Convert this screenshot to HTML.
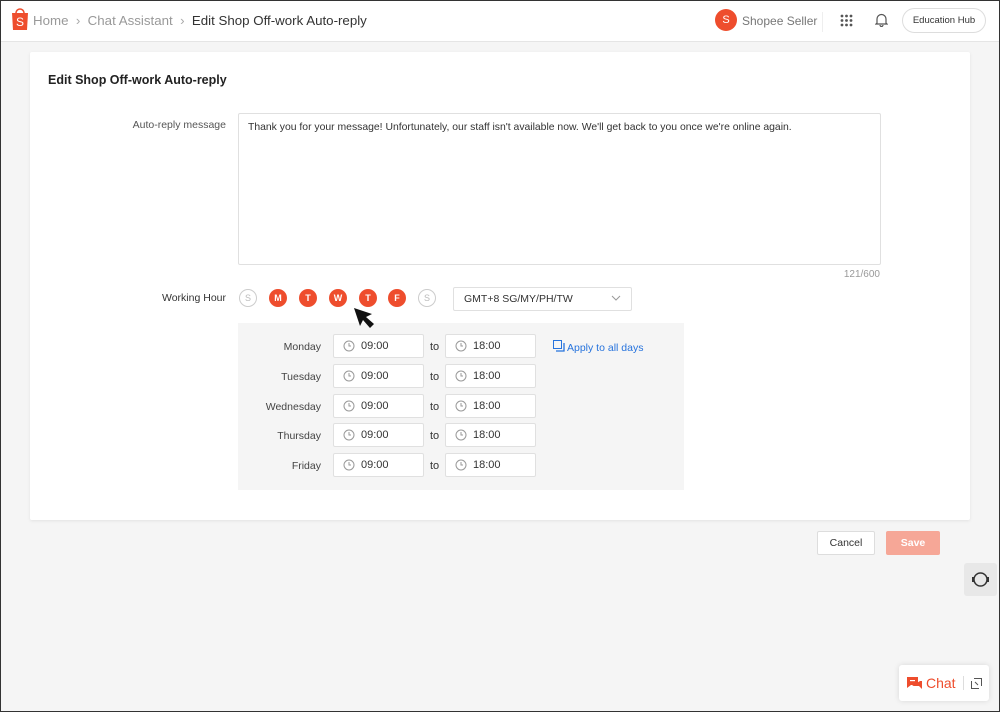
<!DOCTYPE html>
<html><head><meta charset="utf-8"><style>
*{box-sizing:border-box;margin:0;padding:0}
html{background:#f5f5f5}
body{width:1000px;height:712px;overflow:hidden;background:#f5f5f5;font-family:"Liberation Sans",sans-serif;color:#333;position:relative}
.frame{left:0;top:0;width:1000px;height:712px;border:1px solid #333;pointer-events:none;z-index:9}
.a{position:absolute}
.hdr{left:0;top:0;width:1000px;height:42px;background:#fff;border-bottom:1px solid #e5e5e5}
.card{left:30px;top:52px;width:940px;height:468px;background:#fff;border-radius:2px;box-shadow:0 1px 3px rgba(0,0,0,.08)}
.lbl{font-size:10.5px;color:#555;text-align:right;width:200px}
.c{width:18px;height:18px;border-radius:50%;font-size:9px;font-weight:bold;text-align:center;line-height:18px;top:289px}
.on{background:#ee4d2d;color:#fff}
.off{border:1px solid #ccc;color:#bbb;line-height:16px;font-weight:normal}
.inp{width:91px;height:24px;background:#fff;border:1px solid #e0e0e0;border-radius:2px;font-size:11px;line-height:23px;padding-left:27px;color:#333}
.inp svg{position:absolute;left:9px;top:5px}
.day{font-size:10.5px;color:#444;text-align:right;width:80px}
.to{font-size:11px}
</style></head><body>
<div class="a hdr"></div>
<svg class="a" style="left:10px;top:7px" width="20" height="24" viewBox="0 0 20 24"><path d="M2 6h16l-1 17H3z" fill="#ee4d2d"/><path d="M6 6a4 4 0 0 1 8 0" fill="none" stroke="#ee4d2d" stroke-width="1.6"/><text x="10" y="19" fill="#fff" font-size="12" text-anchor="middle" font-family="Liberation Sans">S</text></svg>
<div class="a" style="left:33px;top:13px;font-size:13.3px;color:#999">Home&nbsp;&nbsp;<span style="color:#aaa">›</span>&nbsp;&nbsp;Chat Assistant&nbsp;&nbsp;<span style="color:#aaa">›</span>&nbsp;&nbsp;<span style="color:#333">Edit Shop Off-work Auto-reply</span></div>
<div class="a" style="left:715px;top:9px;width:22px;height:22px;border-radius:50%;background:#ee4d2d;color:#fff;font-size:11px;text-align:center;line-height:22px">S</div>
<div class="a" style="left:742px;top:14px;font-size:12px;color:#777">Shopee Seller</div>
<div class="a" style="left:822px;top:12px;width:1px;height:20px;background:#eee"></div>
<svg class="a" style="left:840px;top:14px" width="13" height="13"><g fill="#555"><circle cx="2" cy="2" r="1.4"/><circle cx="6.5" cy="2" r="1.4"/><circle cx="11" cy="2" r="1.4"/><circle cx="2" cy="6.5" r="1.4"/><circle cx="6.5" cy="6.5" r="1.4"/><circle cx="11" cy="6.5" r="1.4"/><circle cx="2" cy="11" r="1.4"/><circle cx="6.5" cy="11" r="1.4"/><circle cx="11" cy="11" r="1.4"/></g></svg>
<svg class="a" style="left:875px;top:12px" width="13" height="15"><path d="M2 11V7a4.5 4.5 0 0 1 9 0v4l1 1H1z M5 13a1.5 1.5 0 0 0 3 0" fill="none" stroke="#555" stroke-width="1.2"/></svg>
<div class="a" style="left:902px;top:8px;width:84px;height:25px;border:1px solid #ddd;border-radius:13px;font-size:9.5px;text-align:center;line-height:23px;color:#333">Education Hub</div>

<div class="a card"></div>
<div class="a" style="left:48px;top:73px;font-size:12.5px;font-weight:bold;color:#222">Edit Shop Off-work Auto-reply</div>
<div class="a lbl" style="left:26px;top:119px">Auto-reply message</div>
<div class="a" style="left:238px;top:113px;width:643px;height:152px;border:1px solid #e0e0e0;border-radius:2px;padding:8px 9px;font-size:10.4px;color:#333">Thank you for your message! Unfortunately, our staff isn't available now. We'll get back to you once we're online again.</div>
<div class="a" style="left:800px;top:269px;width:80px;text-align:right;font-size:10px;color:#999">121/600</div>
<div class="a lbl" style="left:26px;top:292px;color:#333">Working Hour</div>
<div class="a c off" style="left:239px">S</div>
<div class="a c on" style="left:269px">M</div>
<div class="a c on" style="left:299px">T</div>
<div class="a c on" style="left:329px">W</div>
<div class="a c on" style="left:359px">T</div>
<div class="a c on" style="left:388px">F</div>
<div class="a c off" style="left:418px">S</div>
<div class="a" style="left:453px;top:287px;width:179px;height:24px;border:1px solid #e0e0e0;border-radius:2px;font-size:10.5px;line-height:23px;padding-left:10px">GMT+8 SG/MY/PH/TW</div>
<svg class="a" style="left:611px;top:295px" width="10" height="6"><path d="M1 1l4 4 4-4" fill="none" stroke="#999"/></svg>
<div class="a" style="left:238px;top:323px;width:446px;height:167px;background:#f5f5f5"></div>
<svg class="a" style="left:353px;top:307px;z-index:5" width="24" height="24" viewBox="0 0 24 24"><path d="M1 1L7 19L10 13L17 21L21 17L13 10L19 7Z" fill="#111"/></svg>

<div class="a day" style="left:241px;top:341px">Monday</div>
<div class="a day" style="left:241px;top:371px">Tuesday</div>
<div class="a day" style="left:241px;top:401px">Wednesday</div>
<div class="a day" style="left:241px;top:430px">Thursday</div>
<div class="a day" style="left:241px;top:460px">Friday</div>

<div class="a inp" style="left:333px;top:334px"><svg width="12" height="12"><circle cx="6" cy="6" r="5" fill="none" stroke="#999"/><path d="M6 3v3h2" fill="none" stroke="#999"/></svg>09:00</div>
<div class="a inp" style="left:333px;top:364px"><svg width="12" height="12"><circle cx="6" cy="6" r="5" fill="none" stroke="#999"/><path d="M6 3v3h2" fill="none" stroke="#999"/></svg>09:00</div>
<div class="a inp" style="left:333px;top:394px"><svg width="12" height="12"><circle cx="6" cy="6" r="5" fill="none" stroke="#999"/><path d="M6 3v3h2" fill="none" stroke="#999"/></svg>09:00</div>
<div class="a inp" style="left:333px;top:423px"><svg width="12" height="12"><circle cx="6" cy="6" r="5" fill="none" stroke="#999"/><path d="M6 3v3h2" fill="none" stroke="#999"/></svg>09:00</div>
<div class="a inp" style="left:333px;top:453px"><svg width="12" height="12"><circle cx="6" cy="6" r="5" fill="none" stroke="#999"/><path d="M6 3v3h2" fill="none" stroke="#999"/></svg>09:00</div>
<div class="a inp" style="left:445px;top:334px"><svg width="12" height="12"><circle cx="6" cy="6" r="5" fill="none" stroke="#999"/><path d="M6 3v3h2" fill="none" stroke="#999"/></svg>18:00</div>
<div class="a inp" style="left:445px;top:364px"><svg width="12" height="12"><circle cx="6" cy="6" r="5" fill="none" stroke="#999"/><path d="M6 3v3h2" fill="none" stroke="#999"/></svg>18:00</div>
<div class="a inp" style="left:445px;top:394px"><svg width="12" height="12"><circle cx="6" cy="6" r="5" fill="none" stroke="#999"/><path d="M6 3v3h2" fill="none" stroke="#999"/></svg>18:00</div>
<div class="a inp" style="left:445px;top:423px"><svg width="12" height="12"><circle cx="6" cy="6" r="5" fill="none" stroke="#999"/><path d="M6 3v3h2" fill="none" stroke="#999"/></svg>18:00</div>
<div class="a inp" style="left:445px;top:453px"><svg width="12" height="12"><circle cx="6" cy="6" r="5" fill="none" stroke="#999"/><path d="M6 3v3h2" fill="none" stroke="#999"/></svg>18:00</div>
<div class="a to" style="left:430px;top:341px">to</div>
<div class="a to" style="left:430px;top:371px">to</div>
<div class="a to" style="left:430px;top:401px">to</div>
<div class="a to" style="left:430px;top:430px">to</div>
<div class="a to" style="left:430px;top:460px">to</div>
<svg class="a" style="left:553px;top:340px" width="13" height="12"><rect x="0.5" y="0.5" width="8" height="8" fill="none" stroke="#2673dd"/><path d="M3 11h8V3" fill="none" stroke="#2673dd" stroke-width="1.3"/></svg>
<div class="a" style="left:567px;top:342px;font-size:10.5px;color:#2673dd">Apply to all days</div>

<div class="a" style="left:817px;top:531px;width:58px;height:24px;background:#fff;border:1px solid #ddd;border-radius:2px;font-size:10.5px;text-align:center;line-height:23px;color:#333">Cancel</div>
<div class="a" style="left:886px;top:531px;width:54px;height:24px;background:#f6a797;border-radius:2px;font-size:10.5px;font-weight:bold;text-align:center;line-height:24px;color:#fff">Save</div>
<div class="a" style="left:964px;top:563px;width:33px;height:33px;background:#e8e8e8;border-radius:3px"></div>
<svg class="a" style="left:970px;top:569px" width="21" height="21"><circle cx="10.5" cy="10.5" r="6.5" fill="none" stroke="#333" stroke-width="1.5"/><rect x="2" y="8" width="2.5" height="5" fill="#333"/><rect x="16.5" y="8" width="2.5" height="5" fill="#333"/></svg>
<div class="a" style="left:899px;top:665px;width:90px;height:36px;background:#fff;border-radius:3px;box-shadow:0 0 6px rgba(0,0,0,.12)"></div>
<svg class="a" style="left:907px;top:677px" width="16" height="14"><path d="M0 0h11v8H4l-4 3z" fill="#ee4d2d"/><path d="M5 9h7l3 3V4h-2" fill="#ee4d2d"/><rect x="3" y="3" width="5" height="1.2" fill="#fff"/></svg>
<div class="a" style="left:926px;top:675px;font-size:14px;color:#ee4d2d">Chat</div>
<div class="a" style="left:963px;top:676px;width:1px;height:14px;background:#ddd"></div>
<svg class="a" style="left:971px;top:678px" width="11" height="11"><path d="M3 .5h7.5V8M.5 3v7.5H8" fill="none" stroke="#555"/><path d="M4 4l3 3" stroke="#555"/></svg>
<div class="a frame"></div>
</body></html>
